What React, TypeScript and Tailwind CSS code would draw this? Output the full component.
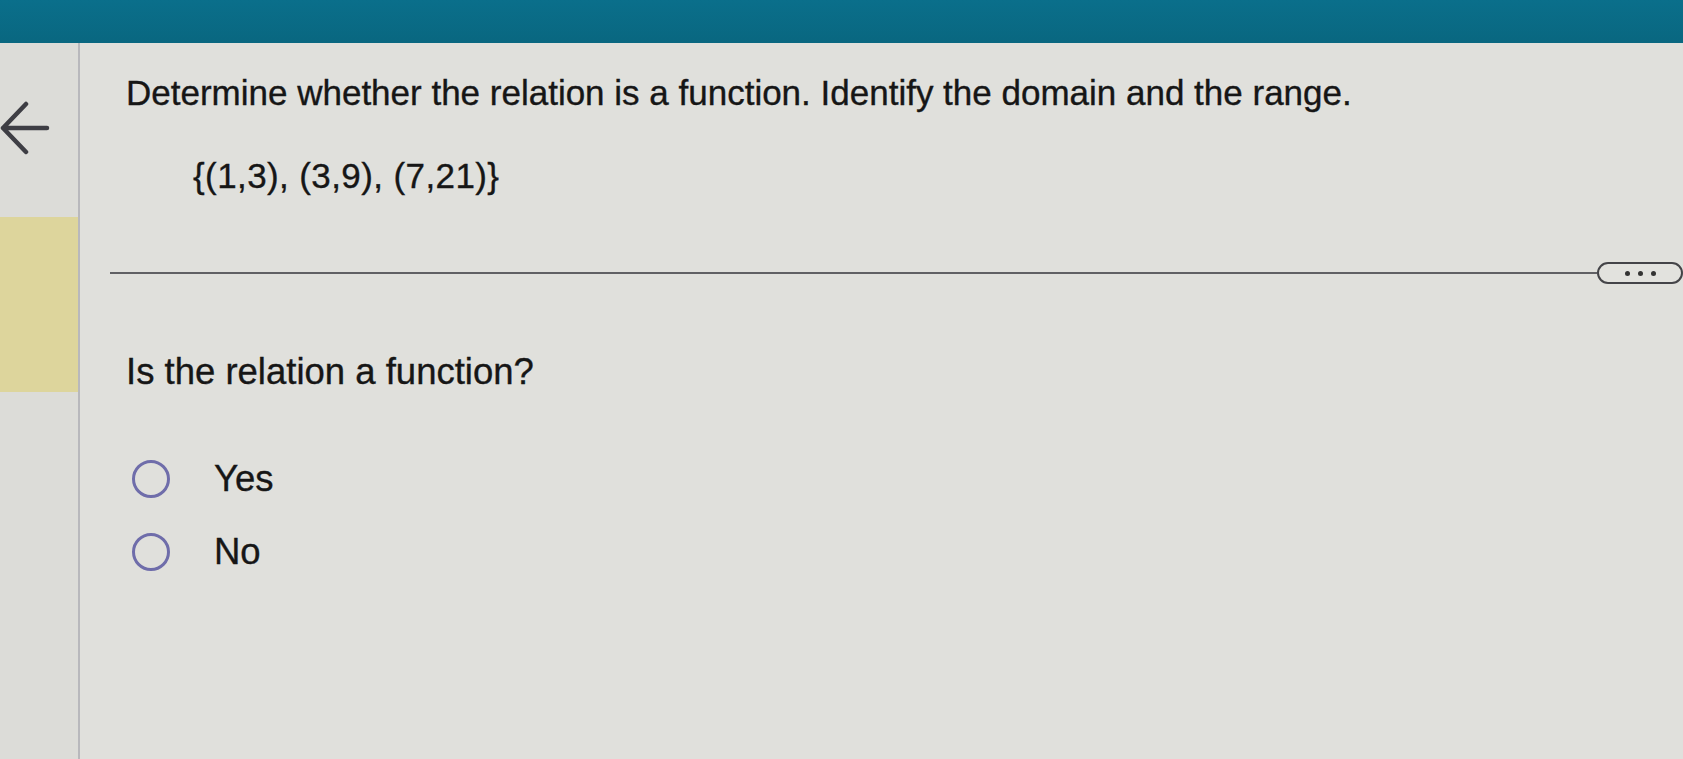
const font = { fontFamily: '"Liberation Sans", Arial, sans-serif' };

const Radio = ({ label }: { label: string }) => (
  <label className="flex h-[40px] items-center">
    <span className="ml-[22px] h-[38px] w-[38px] shrink-0 rounded-full border-[3px] border-[#6f6daa]" />
    <span className="ml-[44px] text-[36.5px] leading-[40px]">{label}</span>
  </label>
);

export default function App() {
  return (
    <div className="flex h-[759px] w-[1683px] flex-col overflow-hidden bg-[#e0e0dc]" style={font}>
      <div className="h-[43px] w-full shrink-0 bg-gradient-to-b from-[#0a6f8b] to-[#096780]" />

      <div className="flex flex-1">
        {/* left rail */}
        <div className="flex w-[80px] shrink-0 flex-col border-r-2 border-[#b8b8bc] bg-[#dcdcd8]">
          <div className="flex h-[174px] items-start pt-[57px]">
            <svg width="50" height="56" viewBox="0 0 50 56" fill="none">
              <path d="M47 28 H3 M3 28 L26 4 M3 28 L26 52" stroke="#3e3e44" strokeWidth="4.5" strokeLinecap="round" strokeLinejoin="round" />
            </svg>
          </div>
          <div className="h-[175px] w-full bg-[#ddd59c]" />
        </div>

        {/* content */}
        <div className="flex flex-1 flex-col pl-[30px] pt-[30px] text-[#161616] [-webkit-text-stroke:0.35px_#161616]">
          <h1 className="pl-[16px] text-[35px] leading-[40px]">
            Determine whether the relation is a function. Identify the domain and the range.
          </h1>
          <p className="mt-[43px] pl-[83px] text-[35px] leading-[40px] tracking-[0.4px]">{"{(1,3), (3,9), (7,21)}"}</p>

          <div className="mt-[66px] flex h-[22px] items-center">
            <div className="h-[2px] flex-1 bg-[#606064]" />
            <button className="flex h-[22px] w-[86px] items-center justify-center gap-[8px] rounded-full border-2 border-[#444448] bg-[#e2e2de]">
              <span className="h-[5px] w-[5px] rounded-full bg-[#333]" />
              <span className="h-[5px] w-[5px] rounded-full bg-[#333]" />
              <span className="h-[5px] w-[5px] rounded-full bg-[#333]" />
            </button>
          </div>

          <p className="mt-[68px] pl-[16px] text-[36.5px] leading-[40px]">Is the relation a function?</p>

          <div className="mt-[67px] flex flex-col gap-[33px]">
            <Radio label="Yes" />
            <Radio label="No" />
          </div>
        </div>
      </div>
    </div>
  );
}
